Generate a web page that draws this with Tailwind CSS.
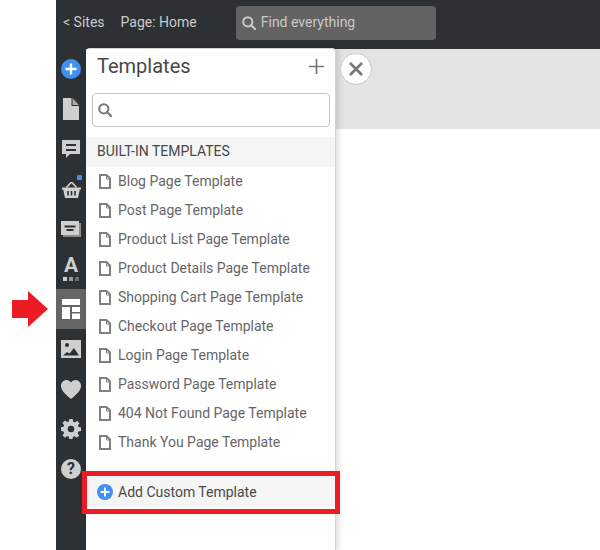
<!DOCTYPE html>
<html lang="en">
<head>
	<meta charset="UTF-8">
	<title>Templates</title>
	<script src="https://cdn.jsdelivr.net/npm/@tailwindcss/browser@4"></script>
</head>
<body>
	<div class="relative flex h-[550px] w-[600px] overflow-hidden bg-white font-['Roboto',sans-serif]">
		<div class="w-14 shrink-0"></div>
		<div class="flex min-w-0 flex-1 flex-col">
			<!-- top bar -->
			<div class="flex h-[49px] shrink-0 items-center bg-[#2e3134] pb-[4px] text-[14px] text-[#c9c9c9]">
				<span class="ml-[7px]">&lt; Sites</span>
				<span class="ml-[16px]">Page: Home</span>
				<div class="ml-[39px] flex h-[34px] w-[200px] items-center rounded-[4px] bg-[#636363] pl-[6px]">
					<svg class="h-[14px] w-[14px]" viewBox="0 0 14 14" fill="none" stroke="#c9c9c9" stroke-width="2"><circle cx="5.8" cy="5.8" r="4.6"/><path d="M9 9l4.4 4.4" stroke-linecap="round"/></svg>
					<span class="ml-[5px]">Find everything</span>
				</div>
			</div>
			<div class="flex min-h-0 flex-1">
				<!-- sidebar -->
				<div class="flex w-[30px] shrink-0 flex-col bg-[#2e3134]">
					<div class="flex h-10 items-center justify-center">
						<svg class="h-5 w-5" viewBox="0 0 20 20"><circle cx="10" cy="10" r="10" fill="#3f92f2"/><path d="M10 4.5v11M4.5 10h11" stroke="#fff" stroke-width="2.4"/></svg>
					</div>
					<div class="flex h-10 items-center justify-center">
						<svg class="h-[22px] w-4" viewBox="0 0 16 22"><path d="M0 0h8.500v8H16v14H0z" fill="#cfcfcf"/><path d="M9.500 0L16 7h-6.500z" fill="#a8a8a8"/></svg>
					</div>
					<div class="flex h-10 items-center justify-center">
						<svg class="h-[18px] w-[18px]" viewBox="0 0 18 18"><path d="M0 0h18v14H8l-4 4v-4H0z" fill="#cfcfcf"/><path d="M4 4h10v2H4zM4 9h10v2H4z" fill="#2e3134"/></svg>
					</div>
					<div class="relative flex h-10 items-center justify-center">
						<svg class="mt-[2px] h-4 w-[19px]" viewBox="0 0 19 16"><path d="M0 5.500h19v2h-1.200L16 16H3L1.200 7.500H0z" fill="#cfcfcf"/><path d="M4.500 5.500L9.500 0l5 5.500" fill="none" stroke="#cfcfcf" stroke-width="1.600"/><path d="M6 9v4.500M9.500 9v4.500M13 9v4.500" stroke="#2e3134" stroke-width="1.600"/></svg>
						<span class="absolute right-[4px] top-[6px] h-[5px] w-[5px] rounded-[1px] bg-[#3f92f2]"></span>
					</div>
					<div class="flex h-10 items-center justify-center">
						<svg class="h-4 w-5" viewBox="0 0 20 16"><path d="M2 2h18v14H2z" fill="#8c8c8c"/><path d="M0 0h18v14H0z" fill="#cfcfcf"/><path d="M3.500 4.500h11v2h-11zM5.500 8h7v2h-7z" fill="#2e3134"/></svg>
					</div>
					<div class="flex h-10 flex-col items-center justify-center">
						<span class="text-[21px] font-bold leading-[17px] text-[#cfcfcf]">A</span>
						<div class="mt-[3px] flex gap-[2px]">
							<span class="h-1 w-1 bg-[#cfcfcf]"></span>
							<span class="h-1 w-1 bg-[#9a9a9a]"></span>
							<span class="h-1 w-1 bg-[#6c6c6c]"></span>
						</div>
					</div>
					<div class="flex h-10 items-center justify-center bg-[#666666]">
						<svg class="h-5 w-[18px]" viewBox="0 0 18 20"><path d="M0 0h18v6H0zM0 8h8v12H0zM10 8h8v5h-8zM10 14.500h8v5.500h-8z" fill="#fff"/></svg>
					</div>
					<div class="flex h-10 items-center justify-center">
						<svg class="h-[18px] w-5" viewBox="0 0 20 18"><path d="M0 0h20v18H0z" fill="#cfcfcf"/><circle cx="6" cy="5" r="2" fill="#2e3134"/><path d="M2 15.500l4-3.500 2.500 1.500L13 8l5 7.500z" fill="#2e3134"/></svg>
					</div>
					<div class="flex h-10 items-center justify-center">
						<svg class="h-[19px] w-5" viewBox="0 0 20 19"><path d="M10 19C4 14 0 10.500 0 5.800 0 2.500 2.500 0 5.500 0 7.300 0 9 .9 10 2.400 11 .9 12.700 0 14.500 0 17.500 0 20 2.500 20 5.800 20 10.500 16 14 10 19z" fill="#cfcfcf"/></svg>
					</div>
					<div class="flex h-10 items-center justify-center">
						<svg class="h-5 w-5" viewBox="0 0 20 20"><path fill-rule="evenodd" d="M8.300 0h3.400l.5 2.700 1.600.7 2.300-1.600 2.400 2.400-1.600 2.300.7 1.600 2.400.5v3.400l-2.700.5-.7 1.600 1.600 2.300-2.400 2.400-2.300-1.600-1.600.7-.5 2.600H8.300l-.5-2.700-1.600-.7-2.300 1.600-2.400-2.400 1.600-2.300-.7-1.600L0 11.700V8.300l2.400-.5.700-1.600-1.600-2.300 2.400-2.400 2.300 1.600 1.600-.7zM10 6.700a3.300 3.300 0 1 0 0 6.600 3.300 3.300 0 0 0 0-6.600z" fill="#cfcfcf"/></svg>
					</div>
					<div class="flex h-10 items-center justify-center">
						<div class="flex h-5 w-5 items-center justify-center rounded-full bg-[#cfcfcf] text-[16px] font-bold leading-none text-[#2e3134]">?</div>
					</div>
				</div>
				<!-- page canvas -->
				<div class="min-w-0 flex-1">
					<div class="h-20 bg-[#e3e3e3]"></div>
				</div>
			</div>
		</div>

		<!-- templates panel -->
		<div class="absolute left-[86px] top-[48px] flex h-[502px] w-[250px] flex-col rounded-t-[4px] border-r border-t border-[#d4d4d4] bg-white shadow-[2px_0_6px_rgba(0,0,0,0.15)]">
			<div class="flex h-[38px] shrink-0 items-center justify-between px-[11px] pb-[4px]">
				<span class="text-[20px] text-[#484848]">Templates</span>
				<svg class="h-[15px] w-[15px]" viewBox="0 0 15 15"><path d="M7.500 0v15M0 7.500h15" stroke="#777" stroke-width="1.700"/></svg>
			</div>
			<div class="ml-[6px] mr-[5px] mt-[6px] flex h-[34px] shrink-0 items-center rounded-[4px] border border-[#c4c4c4] pl-[5px]">
				<svg class="h-[14px] w-[14px]" viewBox="0 0 14 14" fill="none" stroke="#777" stroke-width="2"><circle cx="5.800" cy="5.800" r="4.600"/><path d="M9 9l4.400 4.400" stroke-linecap="round"/></svg>
			</div>
			<div class="mt-[10px] flex h-[30px] shrink-0 items-center bg-[#f5f5f5] pb-[2px] pl-[11px] text-[14px] text-[#484848]">BUILT-IN TEMPLATES</div>
			<ul class="text-[14px] text-[#666666]">
				<li class="flex h-[29px] items-center"><svg class="ml-[13px] mr-[7px] h-[15px] w-3" viewBox="0 0 12 15" fill="none" stroke="#808080"><path stroke-width="2" d="M1 14V1h6.500L11 4.500V14z"/><path d="M7.500 1v4H11"/></svg>Blog Page Template</li>
				<li class="flex h-[29px] items-center"><svg class="ml-[13px] mr-[7px] h-[15px] w-3" viewBox="0 0 12 15" fill="none" stroke="#808080"><path stroke-width="2" d="M1 14V1h6.500L11 4.500V14z"/><path d="M7.500 1v4H11"/></svg>Post Page Template</li>
				<li class="flex h-[29px] items-center"><svg class="ml-[13px] mr-[7px] h-[15px] w-3" viewBox="0 0 12 15" fill="none" stroke="#808080"><path stroke-width="2" d="M1 14V1h6.500L11 4.500V14z"/><path d="M7.500 1v4H11"/></svg>Product List Page Template</li>
				<li class="flex h-[29px] items-center"><svg class="ml-[13px] mr-[7px] h-[15px] w-3" viewBox="0 0 12 15" fill="none" stroke="#808080"><path stroke-width="2" d="M1 14V1h6.500L11 4.500V14z"/><path d="M7.500 1v4H11"/></svg>Product Details Page Template</li>
				<li class="flex h-[29px] items-center"><svg class="ml-[13px] mr-[7px] h-[15px] w-3" viewBox="0 0 12 15" fill="none" stroke="#808080"><path stroke-width="2" d="M1 14V1h6.500L11 4.500V14z"/><path d="M7.500 1v4H11"/></svg>Shopping Cart Page Template</li>
				<li class="flex h-[29px] items-center"><svg class="ml-[13px] mr-[7px] h-[15px] w-3" viewBox="0 0 12 15" fill="none" stroke="#808080"><path stroke-width="2" d="M1 14V1h6.500L11 4.500V14z"/><path d="M7.500 1v4H11"/></svg>Checkout Page Template</li>
				<li class="flex h-[29px] items-center"><svg class="ml-[13px] mr-[7px] h-[15px] w-3" viewBox="0 0 12 15" fill="none" stroke="#808080"><path stroke-width="2" d="M1 14V1h6.500L11 4.500V14z"/><path d="M7.500 1v4H11"/></svg>Login Page Template</li>
				<li class="flex h-[29px] items-center"><svg class="ml-[13px] mr-[7px] h-[15px] w-3" viewBox="0 0 12 15" fill="none" stroke="#808080"><path stroke-width="2" d="M1 14V1h6.500L11 4.500V14z"/><path d="M7.500 1v4H11"/></svg>Password Page Template</li>
				<li class="flex h-[29px] items-center"><svg class="ml-[13px] mr-[7px] h-[15px] w-3" viewBox="0 0 12 15" fill="none" stroke="#808080"><path stroke-width="2" d="M1 14V1h6.500L11 4.500V14z"/><path d="M7.500 1v4H11"/></svg>404 Not Found Page Template</li>
				<li class="flex h-[29px] items-center"><svg class="ml-[13px] mr-[7px] h-[15px] w-3" viewBox="0 0 12 15" fill="none" stroke="#808080"><path stroke-width="2" d="M1 14V1h6.500L11 4.500V14z"/><path d="M7.500 1v4H11"/></svg>Thank You Page Template</li>
			</ul>
			<div class="mt-5 flex h-[30px] shrink-0 items-center bg-[#f5f5f5] text-[14px] text-[#484848]">
				<svg class="ml-[11px] mr-[5px] h-4 w-4" viewBox="0 0 16 16"><circle cx="8" cy="8" r="8" fill="#3f92f2"/><path d="M8 3.500v9M3.500 8h9" stroke="#fff" stroke-width="2"/></svg>
				Add Custom Template
			</div>
		</div>

		<!-- close button -->
		<div class="absolute left-[340px] top-[53px] flex h-8 w-8 items-center justify-center rounded-full border border-[#c9c9c9] bg-white">
			<svg class="h-[14px] w-[14px]" viewBox="0 0 14 14"><path d="M1 1l12 12M13 1L1 13" stroke="#777" stroke-width="2.600"/></svg>
		</div>

		<!-- annotations -->
		<svg class="absolute left-[12px] top-[291px] h-9 w-9" viewBox="0 0 36 36"><path d="M0 9h16V0l20 18-20 18v-9H0z" fill="#ed1c24"/></svg>
		<div class="absolute left-[82px] top-[471px] h-[43px] w-[258px] border-[5px] border-[#ed1c24]"></div>
	</div>
</body>
</html>
